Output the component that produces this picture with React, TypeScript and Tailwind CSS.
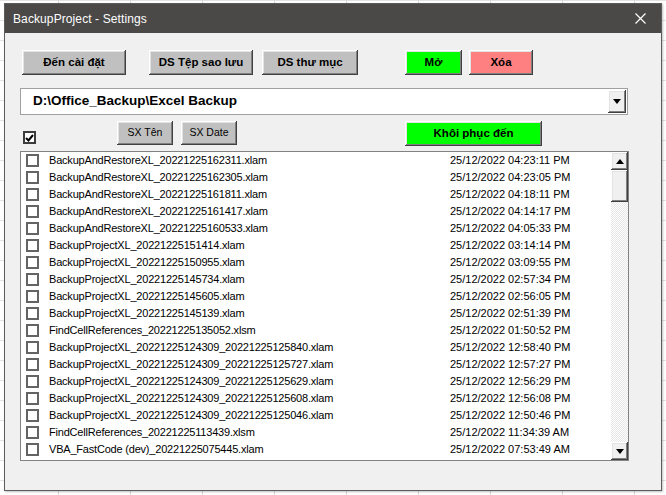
import React from 'react';

const files: [string, string][] = [
  ['BackupAndRestoreXL_20221225162311.xlam', '25/12/2022 04:23:11 PM'],
  ['BackupAndRestoreXL_20221225162305.xlam', '25/12/2022 04:23:05 PM'],
  ['BackupAndRestoreXL_20221225161811.xlam', '25/12/2022 04:18:11 PM'],
  ['BackupAndRestoreXL_20221225161417.xlam', '25/12/2022 04:14:17 PM'],
  ['BackupAndRestoreXL_20221225160533.xlam', '25/12/2022 04:05:33 PM'],
  ['BackupProjectXL_20221225151414.xlam', '25/12/2022 03:14:14 PM'],
  ['BackupProjectXL_20221225150955.xlam', '25/12/2022 03:09:55 PM'],
  ['BackupProjectXL_20221225145734.xlam', '25/12/2022 02:57:34 PM'],
  ['BackupProjectXL_20221225145605.xlam', '25/12/2022 02:56:05 PM'],
  ['BackupProjectXL_20221225145139.xlam', '25/12/2022 02:51:39 PM'],
  ['FindCellReferences_20221225135052.xlsm', '25/12/2022 01:50:52 PM'],
  ['BackupProjectXL_20221225124309_20221225125840.xlam', '25/12/2022 12:58:40 PM'],
  ['BackupProjectXL_20221225124309_20221225125727.xlam', '25/12/2022 12:57:27 PM'],
  ['BackupProjectXL_20221225124309_20221225125629.xlam', '25/12/2022 12:56:29 PM'],
  ['BackupProjectXL_20221225124309_20221225125608.xlam', '25/12/2022 12:56:08 PM'],
  ['BackupProjectXL_20221225124309_20221225125046.xlam', '25/12/2022 12:50:46 PM'],
  ['FindCellReferences_20221225113439.xlsm', '25/12/2022 11:34:39 AM'],
  ['VBA_FastCode (dev)_20221225075445.xlam', '25/12/2022 07:53:49 AM'],
];

const raised =
  'shadow-[inset_-1px_-1px_#404040,inset_1px_1px_#ffffff,inset_-2px_-2px_#808080,inset_2px_2px_#e3e3e3]';

function Btn({ label, className }: { label: string; className: string }) {
  return (
    <div
      className={`flex items-center justify-center font-bold text-[11.5px] text-black ${raised} ${className}`}
    >
      {label}
    </div>
  );
}

function Arrow({ up }: { up?: boolean }) {
  return (
    <svg width="8" height="5" viewBox="0 0 8 5">
      {up ? <path d="M0 5 L4 0 L8 5 Z" fill="#000" /> : <path d="M0 0 L8 0 L4 5 Z" fill="#000" />}
    </svg>
  );
}

export default function App() {
  return (
    <div className="w-[666px] h-[495px] overflow-hidden bg-white bg-[linear-gradient(90deg,#d9d9d9_1px,transparent_1px),linear-gradient(#e3e3e3_1px,transparent_1px)] bg-[size:72px_20px] bg-[position:58px_0] font-['Liberation_Sans',Arial,sans-serif] pt-[3px] pl-[4px]">
      {/* Dialog window */}
      <div className="w-[658px] h-[488px] border border-[#5c5c5c] bg-[#f0f0f0] flex flex-col shadow-[1px_1px_2px_rgba(0,0,0,0.25)]">
        {/* Title bar */}
        <div className="h-[29px] bg-[#4a4947] flex items-center justify-between pl-[8px] pr-[10px]">
          <span className="text-white text-[12px] tracking-[0.1px]">BackupProject - Settings</span>
          <svg width="11" height="11" viewBox="0 0 11 11" className="mr-[5px]">
            <path d="M0.5 0.5 L10.5 10.5 M10.5 0.5 L0.5 10.5" stroke="#fff" strokeWidth="1.2" />
          </svg>
        </div>

        <div className="flex flex-col pl-[15px]">
          {/* Top buttons */}
          <div className="flex mt-[17px] ml-[2px] h-[25px]">
            <Btn label="Đến cài đặt" className="w-[104px] bg-[#c0c0c0]" />
            <Btn label="DS Tệp sao lưu" className="w-[104px] ml-[23px] bg-[#c0c0c0]" />
            <Btn label="DS thư mục" className="w-[96px] ml-[9px] bg-[#c0c0c0]" />
            <Btn label="Mở" className="w-[57px] ml-[47px] bg-[#00ff00]" />
            <Btn label="Xóa" className="w-[64px] ml-[7px] bg-[#ff8080]" />
          </div>

          {/* Combo box */}
          <div className="mt-[13px] w-[608px] h-[27px] bg-white border border-[#a0a0a0] flex items-center">
            <span className="flex-1 pl-[12px] font-bold text-[13.5px] text-black">
              D:\Office_Backup\Excel Backup
            </span>
            <div className={`w-[18px] h-[23px] mr-[1px] bg-[#f0f0f0] flex items-center justify-center ${raised}`}>
              <Arrow />
            </div>
          </div>

          {/* Second row */}
          <div className="flex mt-[6px] h-[25px]">
            <div className="w-[13px] h-[13px] ml-[3px] mt-[10px] border-2 border-[#3c3c3c] bg-white flex items-center justify-center">
              <svg width="9" height="8" viewBox="0 0 9 8">
                <path d="M1 4 L3.5 6.5 L8 1" stroke="#000" strokeWidth="2" fill="none" />
              </svg>
            </div>
            <div className={`w-[56px] h-[24px] ml-[81px] bg-[#c0c0c0] flex items-center justify-center text-[10.5px] text-black ${raised}`}>
              SX Tên
            </div>
            <div className={`w-[56px] h-[24px] ml-[8px] bg-[#c0c0c0] flex items-center justify-center text-[10.5px] text-black ${raised}`}>
              SX Date
            </div>
            <Btn label="Khôi phục đến" className="w-[137px] ml-[168px] bg-[#00ff00]" />
          </div>

          {/* File list */}
          <div className="mt-[5px] w-[609px] h-[310px] bg-white border border-[#828282] flex">
            <div className="flex-1 flex flex-col">
              {files.map(([name, date]) => (
                <div key={name} className="h-[17px] flex items-center text-[11px] text-black">
                  <div className="w-[13px] h-[13px] ml-[5px] border-2 border-[#646464] bg-white" />
                  <span className="ml-[10px] w-[401px] whitespace-nowrap tracking-[-0.2px]">{name}</span>
                  <span className="whitespace-nowrap">{date}</span>
                </div>
              ))}
            </div>
            {/* Scrollbar */}
            <div className="w-[17px] flex flex-col bg-[repeating-conic-gradient(#ffffff_0_25%,#e6e6e6_0_50%)] bg-[size:2px_2px]">
              <div className={`h-[18px] bg-[#f0f0f0] flex items-center justify-center ${raised}`}>
                <Arrow up />
              </div>
              <div className={`h-[32px] bg-[#f0f0f0] ${raised}`} />
              <div className="flex-1" />
              <div className={`h-[18px] bg-[#f0f0f0] flex items-center justify-center ${raised}`}>
                <Arrow />
              </div>
            </div>
          </div>
        </div>
      </div>
    </div>
  );
}
